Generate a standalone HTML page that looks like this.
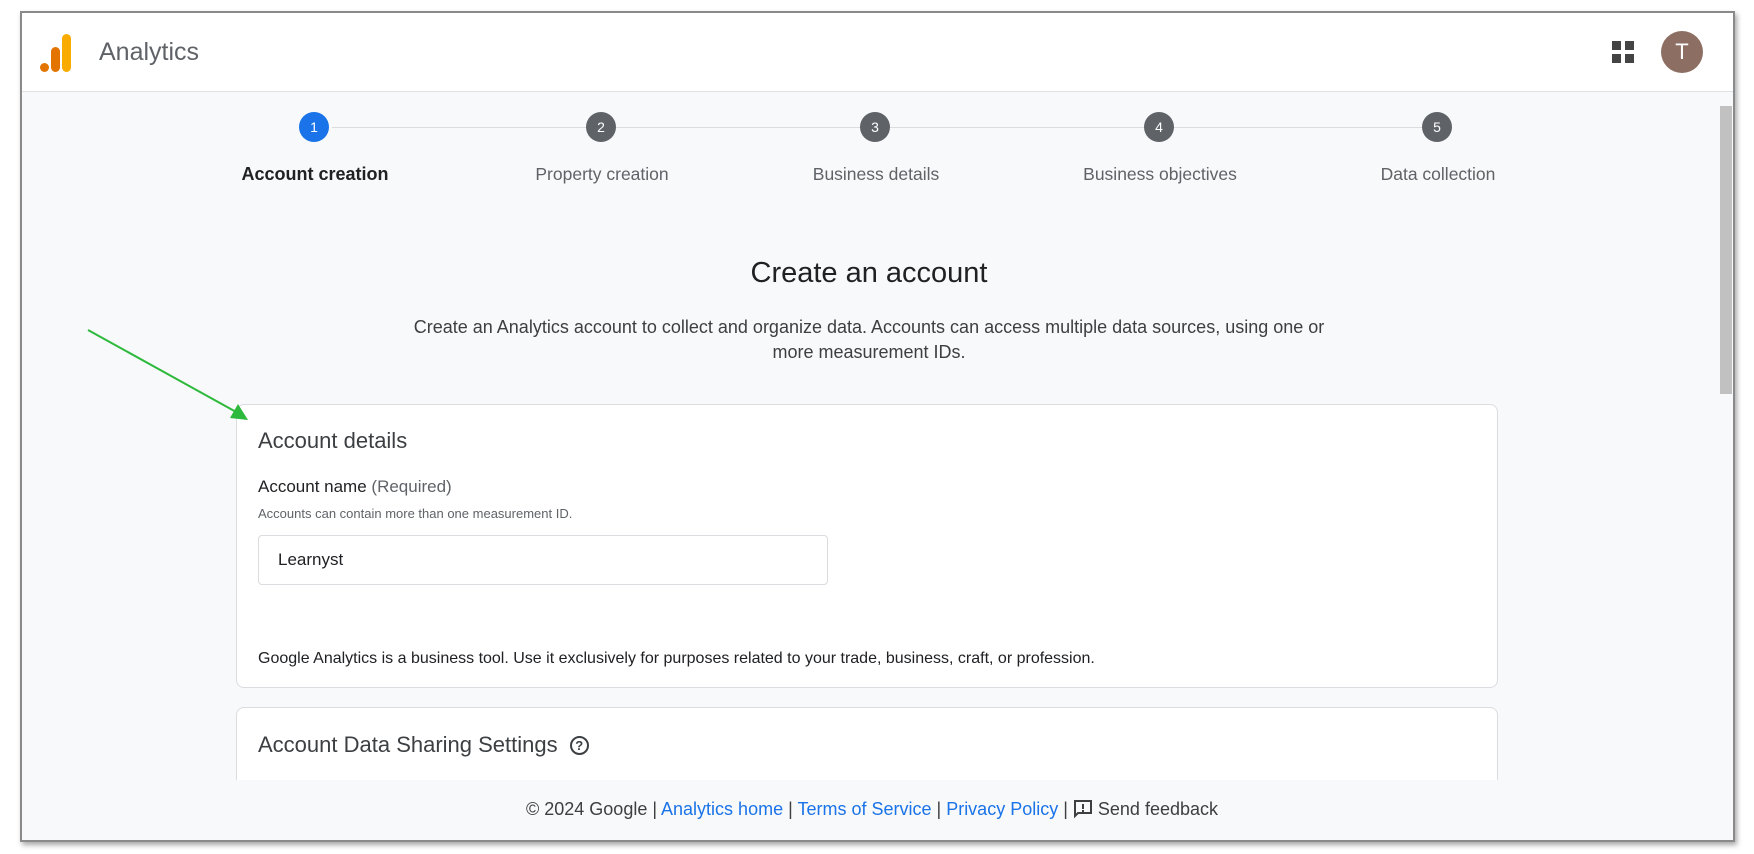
<!DOCTYPE html>
<html><head><meta charset="utf-8"><style>
*{margin:0;padding:0;box-sizing:border-box}
body{width:1754px;height:854px;background:#fff;font-family:"Liberation Sans",Arial,sans-serif;position:relative;overflow:hidden;color:#202124}
.frame{position:absolute;left:20px;top:11px;width:1715px;height:831px;border:2px solid #8a8a8a;box-shadow:2px 3px 5px rgba(0,0,0,.35);background:#f8f9fa;overflow:hidden}
.hdr{position:absolute;left:0;top:0;right:0;height:79px;background:#fff;border-bottom:1px solid #e0e0e0}
.abs{position:absolute}
.circ{position:absolute;width:30px;height:30px;border-radius:50%;background:#5f6368;color:#fff;font-size:14px;text-align:center;line-height:30px}
.lbl{position:absolute;font-size:17.5px;color:#5f6368;transform:translateX(-50%);white-space:nowrap}
.card{position:absolute;left:214px;width:1262px;background:#fff;border:1px solid #dadce0;border-radius:8px}
.sb{position:absolute;left:1698px;top:93px;width:12px;height:288px;background:#c1c1c1}
</style></head><body>
<div class="frame">
 <div class="hdr">
  <svg class="abs" style="left:18px;top:21px" width="34" height="38" viewBox="0 0 34 38">
   <rect x="22" y="0" width="9" height="38" rx="4.5" fill="#f9ab00"/>
   <rect x="11" y="13" width="9" height="25" rx="4.5" fill="#e37400"/>
   <circle cx="4.5" cy="33.5" r="4.5" fill="#e37400"/>
  </svg>
  <div class="abs" style="left:77px;top:25px;font-size:25px;color:#5f6368">Analytics</div>
  <svg class="abs" style="left:1590px;top:28px" width="22" height="22" viewBox="0 0 22 22" fill="#444">
   <rect x="0" y="0" width="9" height="9"/><rect x="13" y="0" width="9" height="9"/><rect x="0" y="13" width="9" height="9"/><rect x="13" y="13" width="9" height="9"/>
  </svg>
  <div class="abs" style="left:1639px;top:18px;width:42px;height:42px;border-radius:50%;background:#8d6e63;color:#fff;font-size:22px;text-align:center;line-height:42px">T</div>
 </div>
 <div class="sb"></div>
 <div class="abs" style="left:310px;top:114px;width:1110px;height:1px;background:#dadce0"></div>
 <div class="circ" style="left:277px;top:99px;background:#1a73e8">1</div>
 <div class="circ" style="left:564px;top:99px">2</div>
 <div class="circ" style="left:838px;top:99px">3</div>
 <div class="circ" style="left:1122px;top:99px">4</div>
 <div class="circ" style="left:1400px;top:99px">5</div>
 <div class="lbl" style="left:293px;top:151px;color:#202124;font-weight:bold;font-size:18px">Account creation</div>
 <div class="lbl" style="left:580px;top:151px">Property creation</div>
 <div class="lbl" style="left:854px;top:151px">Business details</div>
 <div class="lbl" style="left:1138px;top:151px">Business objectives</div>
 <div class="lbl" style="left:1416px;top:151px">Data collection</div>
 <div class="abs" style="left:0;width:1694px;top:244px;text-align:center;font-size:29px;color:#202124">Create an account</div>
 <div class="abs" style="left:377px;width:940px;top:302px;text-align:center;font-size:18px;line-height:25px;color:#3c4043">Create an Analytics account to collect and organize data. Accounts can access multiple data sources, using one or more measurement IDs.</div>
 <div class="card" style="top:391px;height:284px">
  <div class="abs" style="left:21px;top:23px;font-size:22px;color:#3c4043">Account details</div>
  <div class="abs" style="left:21px;top:72px;font-size:17px">Account name <span style="color:#5f6368">(Required)</span></div>
  <div class="abs" style="left:21px;top:101px;font-size:13px;color:#5f6368">Accounts can contain more than one measurement ID.</div>
  <div class="abs" style="left:21px;top:130px;width:570px;height:50px;border:1px solid #dadce0;border-radius:4px;font-size:17px;padding:14px 0 0 19px">Learnyst</div>
  <div class="abs" style="left:21px;top:245px;font-size:16px">Google Analytics is a business tool. Use it exclusively for purposes related to your trade, business, craft, or profession.</div>
 </div>
 <div class="card" style="top:694px;height:120px">
  <div class="abs" style="left:21px;top:24px;font-size:22px;color:#3c4043">Account Data Sharing Settings <span style="display:inline-block;width:19px;height:19px;border:2px solid #3c4043;border-radius:50%;font-size:13px;text-align:center;line-height:15px;font-weight:bold;vertical-align:2px;margin-left:6px">?</span></div>
 </div>
 <div class="abs" style="left:0;top:767px;width:1698px;height:70px;background:#f8f9fa"></div>
 <div class="abs" style="left:0;width:1700px;top:786px;text-align:center;font-size:18px;color:#3c4043">© 2024 Google | <span style="color:#1a73e8">Analytics home</span> | <span style="color:#1a73e8">Terms of Service</span> | <span style="color:#1a73e8">Privacy Policy</span> | <svg width="20" height="20" viewBox="0 0 20 20" style="vertical-align:-4px"><path d="M2 2h16v12H5l-3 3z" fill="none" stroke="#3c4043" stroke-width="2"/><rect x="9" y="5" width="2" height="5" fill="#3c4043"/><rect x="9" y="11" width="2" height="2" fill="#3c4043"/></svg> Send feedback</div>
</div>
<svg class="abs" style="left:0;top:0" width="300" height="440">
 <line x1="88" y1="330" x2="238" y2="413" stroke="#2db93c" stroke-width="2"/>
 <polygon points="248,420 230,418 238,404" fill="#2db93c"/>
</svg>
</body></html>
